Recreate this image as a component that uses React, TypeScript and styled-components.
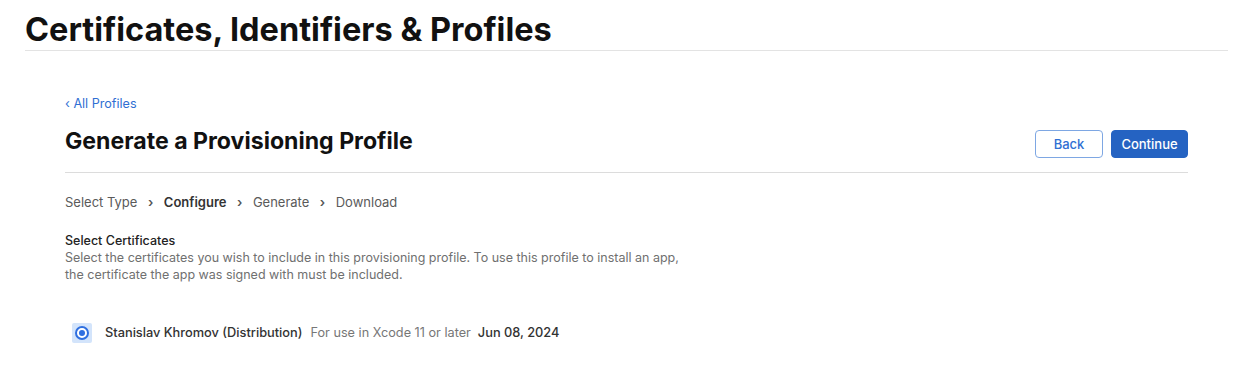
import React from "react";
import styled, { createGlobalStyle } from "styled-components";

const Global = createGlobalStyle`
  html, body { margin: 0; padding: 0; background: #fff; }
  body { font-family: Inter, "Liberation Sans", Arial, sans-serif; color: #1d1d1f; -webkit-font-smoothing: antialiased; }
  * { box-sizing: border-box; }
`;

const Page = styled.div`
  width: 1240px;
  height: 383px;
  padding: 12px 12px 0 25px;
  overflow: hidden;
`;

const Header = styled.header`
  border-bottom: 1px solid #e3e3e3;
  padding-bottom: 3px;
`;

const Title = styled.h1`
  margin: 0;
  font-size: 32.5px;
  line-height: 35px;
  font-weight: 700;
  letter-spacing: 0;
  color: #111;
`;

const Content = styled.main`
  padding: 41px 40px 0 40px;
`;

const BackLink = styled.a`
  display: inline-block;
  font-size: 12.6px;
  line-height: 16px;
  color: #2f6fd3;
  text-decoration: none;
`;

const TopBar = styled.div`
  display: flex;
  align-items: flex-start;
  justify-content: space-between;
  margin-top: 14px;
  padding-bottom: 14px;
  border-bottom: 1px solid #dcdcdc;
`;

const PageTitle = styled.h2`
  margin: 0;
  font-size: 23.1px;
  line-height: 30px;
  font-weight: 700;
  letter-spacing: 0;
  color: #111;
`;

const Actions = styled.div`
  display: flex;
  gap: 8px;
  margin-top: 4px;
`;

const Button = styled.button<{ $primary?: boolean }>`
  height: 28px;
  padding: 0;
  width: ${(p) => (p.$primary ? "77px" : "68px")};
  border-radius: 4px;
  font-family: inherit;
  font-size: 13px;
  font-weight: 500;
  cursor: pointer;
  border: 1px solid ${(p) => (p.$primary ? "#2563c2" : "#7ea7e3")};
  background: ${(p) => (p.$primary ? "#2563c2" : "#fff")};
  color: ${(p) => (p.$primary ? "#fff" : "#2f6fd3")};
`;

const Steps = styled.nav`
  display: flex;
  align-items: center;
  gap: 10.5px;
  margin-top: 21px;
  font-size: 13px;
  line-height: 16px;
  color: #5a5a5a;
`;

const Step = styled.span<{ $active?: boolean }>`
  font-weight: ${(p) => (p.$active ? 600 : 400)};
  color: ${(p) => (p.$active ? "#333" : "#5a5a5a")};
`;

const Chevron = styled.span`
  font-size: 13px;
  color: #555;
  font-weight: 600;
`;

const Section = styled.section`
  margin-top: 23px;
`;

const SectionTitle = styled.div`
  font-size: 12.5px;
  line-height: 16px;
  font-weight: 500;
  color: #222;
`;

const SectionText = styled.p`
  margin: 0;
  font-size: 12.5px;
  line-height: 17px;
  color: #707070;
  max-width: 625px;
`;

const CertRow = styled.label`
  display: flex;
  align-items: center;
  margin-top: 40px;
  padding-left: 7px;
  font-size: 12.8px;
  line-height: 16px;
`;

const RadioWrap = styled.span`
  width: 20px;
  height: 20px;
  background: #d3e4fb;
  display: flex;
  align-items: center;
  justify-content: center;
  border-radius: 2px;
  margin-right: 13px;
`;

const Radio = styled.span`
  width: 14px;
  height: 14px;
  border-radius: 50%;
  border: 2px solid #2f6fe0;
  background: #fff;
  display: flex;
  align-items: center;
  justify-content: center;
  &::after {
    content: "";
    width: 6px;
    height: 6px;
    border-radius: 50%;
    background: #2f6fe0;
  }
`;

const CertName = styled.span`
  font-weight: 500;
  color: #333;
  margin-right: 8px;
`;

const CertNote = styled.span`
  color: #777;
  font-size: 12.7px;
  margin-right: 7px;
`;

const CertDate = styled.span`
  font-weight: 500;
  color: #333;
`;

export default function App() {
  return (
    <>
      <Global />
      <Page>
        <Header>
          <Title>Certificates, Identifiers &amp; Profiles</Title>
        </Header>
        <Content>
          <BackLink href="#">‹ All Profiles</BackLink>
          <TopBar>
            <PageTitle>Generate a Provisioning Profile</PageTitle>
            <Actions>
              <Button>Back</Button>
              <Button $primary>Continue</Button>
            </Actions>
          </TopBar>
          <Steps>
            <Step>Select Type</Step>
            <Chevron>›</Chevron>
            <Step $active>Configure</Step>
            <Chevron>›</Chevron>
            <Step>Generate</Step>
            <Chevron>›</Chevron>
            <Step>Download</Step>
          </Steps>
          <Section>
            <SectionTitle>Select Certificates</SectionTitle>
            <SectionText>
              Select the certificates you wish to include in this provisioning profile. To use this profile to install an app, the certificate the app was signed with must be included.
            </SectionText>
          </Section>
          <CertRow>
            <RadioWrap>
              <Radio />
            </RadioWrap>
            <CertName>Stanislav Khromov (Distribution)</CertName>
            <CertNote>For use in Xcode 11 or later</CertNote>
            <CertDate>Jun 08, 2024</CertDate>
          </CertRow>
        </Content>
      </Page>
    </>
  );
}
